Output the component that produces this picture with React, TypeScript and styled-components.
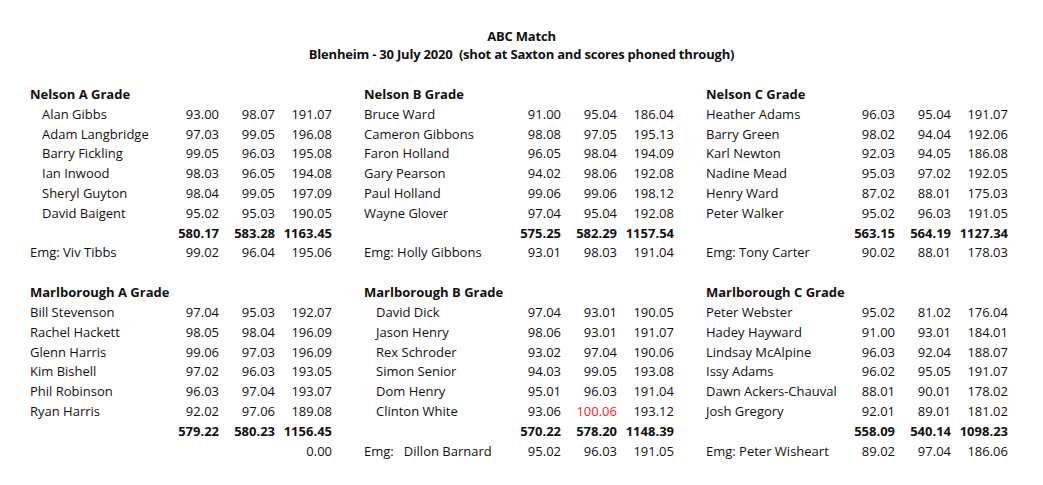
import React from "react";
import styled, { createGlobalStyle } from "styled-components";

const Global = createGlobalStyle`
  html, body { margin: 0; padding: 0; background: #ffffff; }
  body { font-family: "Open Sans", "Liberation Sans", sans-serif; color: #111; }
`;

const Page = styled.div`
  width: 1043px;
  height: 485px;
  box-sizing: border-box;
  padding-top: 27px;
  font-size: 13px;
`;

const Title = styled.div`
  text-align: center;
  font-weight: 700;
  line-height: 18px;
  letter-spacing: -0.2px;
  white-space: pre;
`;

const Sections = styled.div`
  margin-top: 22px;
  display: flex;
  flex-direction: column;
  gap: 20px;
`;

const Section = styled.div`
  display: flex;
  gap: 32px;
  padding-left: 30px;
`;

const Block = styled.div<{ $nameW: number }>`
  display: grid;
  grid-template-columns: ${(p) => p.$nameW}px 56px 56px 57px;
  grid-auto-rows: 19.8px;
  line-height: 19.8px;
`;

const Heading = styled.div`
  grid-column: 1 / -1;
  font-weight: 700;
`;

const Name = styled.div<{ $indent?: boolean }>`
  padding-left: ${(p) => (p.$indent ? 12 : 0)}px;
  white-space: pre;
`;

const Num = styled.div<{ $bold?: boolean; $red?: boolean }>`
  text-align: right;
  font-weight: ${(p) => (p.$bold ? 700 : 400)};
  color: ${(p) => (p.$red ? "#ee1c25" : "inherit")};
  white-space: nowrap;
`;

type Row = [string, string, string, string];

interface Team {
  title: string;
  nameW: number;
  indent: boolean;
  rows: Row[];
  total: [string, string, string];
  emg: Row;
  red?: string;
}

const teams: Team[][] = [
  [
    {
      title: "Nelson A Grade",
      nameW: 133,
      indent: true,
      rows: [
        ["Alan Gibbs", "93.00", "98.07", "191.07"],
        ["Adam Langbridge", "97.03", "99.05", "196.08"],
        ["Barry Fickling", "99.05", "96.03", "195.08"],
        ["Ian Inwood", "98.03", "96.05", "194.08"],
        ["Sheryl Guyton", "98.04", "99.05", "197.09"],
        ["David Baigent", "95.02", "95.03", "190.05"],
      ],
      total: ["580.17", "583.28", "1163.45"],
      emg: ["Emg: Viv Tibbs", "99.02", "96.04", "195.06"],
    },
    {
      title: "Nelson B Grade",
      nameW: 141,
      indent: false,
      rows: [
        ["Bruce Ward", "91.00", "95.04", "186.04"],
        ["Cameron Gibbons", "98.08", "97.05", "195.13"],
        ["Faron Holland", "96.05", "98.04", "194.09"],
        ["Gary Pearson", "94.02", "98.06", "192.08"],
        ["Paul Holland", "99.06", "99.06", "198.12"],
        ["Wayne Glover", "97.04", "95.04", "192.08"],
      ],
      total: ["575.25", "582.29", "1157.54"],
      emg: ["Emg: Holly Gibbons", "93.01", "98.03", "191.04"],
    },
    {
      title: "Nelson C Grade",
      nameW: 133,
      indent: false,
      rows: [
        ["Heather Adams", "96.03", "95.04", "191.07"],
        ["Barry Green", "98.02", "94.04", "192.06"],
        ["Karl Newton", "92.03", "94.05", "186.08"],
        ["Nadine Mead", "95.03", "97.02", "192.05"],
        ["Henry Ward", "87.02", "88.01", "175.03"],
        ["Peter Walker", "95.02", "96.03", "191.05"],
      ],
      total: ["563.15", "564.19", "1127.34"],
      emg: ["Emg: Tony Carter", "90.02", "88.01", "178.03"],
    },
  ],
  [
    {
      title: "Marlborough A Grade",
      nameW: 133,
      indent: false,
      rows: [
        ["Bill Stevenson", "97.04", "95.03", "192.07"],
        ["Rachel Hackett", "98.05", "98.04", "196.09"],
        ["Glenn Harris", "99.06", "97.03", "196.09"],
        ["Kim Bishell", "97.02", "96.03", "193.05"],
        ["Phil Robinson", "96.03", "97.04", "193.07"],
        ["Ryan Harris", "92.02", "97.06", "189.08"],
      ],
      total: ["579.22", "580.23", "1156.45"],
      emg: ["", "", "", "0.00"],
    },
    {
      title: "Marlborough B Grade",
      nameW: 141,
      indent: true,
      rows: [
        ["David Dick", "97.04", "93.01", "190.05"],
        ["Jason Henry", "98.06", "93.01", "191.07"],
        ["Rex Schroder", "93.02", "97.04", "190.06"],
        ["Simon Senior", "94.03", "99.05", "193.08"],
        ["Dom Henry", "95.01", "96.03", "191.04"],
        ["Clinton White", "93.06", "100.06", "193.12"],
      ],
      total: ["570.22", "578.20", "1148.39"],
      emg: ["Emg:   Dillon Barnard", "95.02", "96.03", "191.05"],
      red: "100.06",
    },
    {
      title: "Marlborough C Grade",
      nameW: 133,
      indent: false,
      rows: [
        ["Peter Webster", "95.02", "81.02", "176.04"],
        ["Hadey Hayward", "91.00", "93.01", "184.01"],
        ["Lindsay McAlpine", "96.03", "92.04", "188.07"],
        ["Issy Adams", "96.02", "95.05", "191.07"],
        ["Dawn Ackers-Chauval", "88.01", "90.01", "178.02"],
        ["Josh Gregory", "92.01", "89.01", "181.02"],
      ],
      total: ["558.09", "540.14", "1098.23"],
      emg: ["Emg: Peter Wisheart", "89.02", "97.04", "186.06"],
    },
  ],
];

function TeamBlock({ team }: { team: Team }) {
  return (
    <Block $nameW={team.nameW}>
      <Heading>{team.title}</Heading>
      {team.rows.map((r) => (
        <React.Fragment key={r[0]}>
          <Name $indent={team.indent}>{r[0]}</Name>
          <Num>{r[1]}</Num>
          <Num $red={team.red === r[2]}>{r[2]}</Num>
          <Num>{r[3]}</Num>
        </React.Fragment>
      ))}
      <Name />
      <Num $bold>{team.total[0]}</Num>
      <Num $bold>{team.total[1]}</Num>
      <Num $bold>{team.total[2]}</Num>
      <Name>{team.emg[0]}</Name>
      <Num>{team.emg[1]}</Num>
      <Num>{team.emg[2]}</Num>
      <Num>{team.emg[3]}</Num>
    </Block>
  );
}

export default function App() {
  return (
    <Page>
      <Global />
      <Title>ABC Match</Title>
      <Title>{"Blenheim - 30 July 2020  (shot at Saxton and scores phoned through)"}</Title>
      <Sections>
        {teams.map((sec, i) => (
          <Section key={i}>
            {sec.map((t) => (
              <TeamBlock key={t.title} team={t} />
            ))}
          </Section>
        ))}
      </Sections>
    </Page>
  );
}
